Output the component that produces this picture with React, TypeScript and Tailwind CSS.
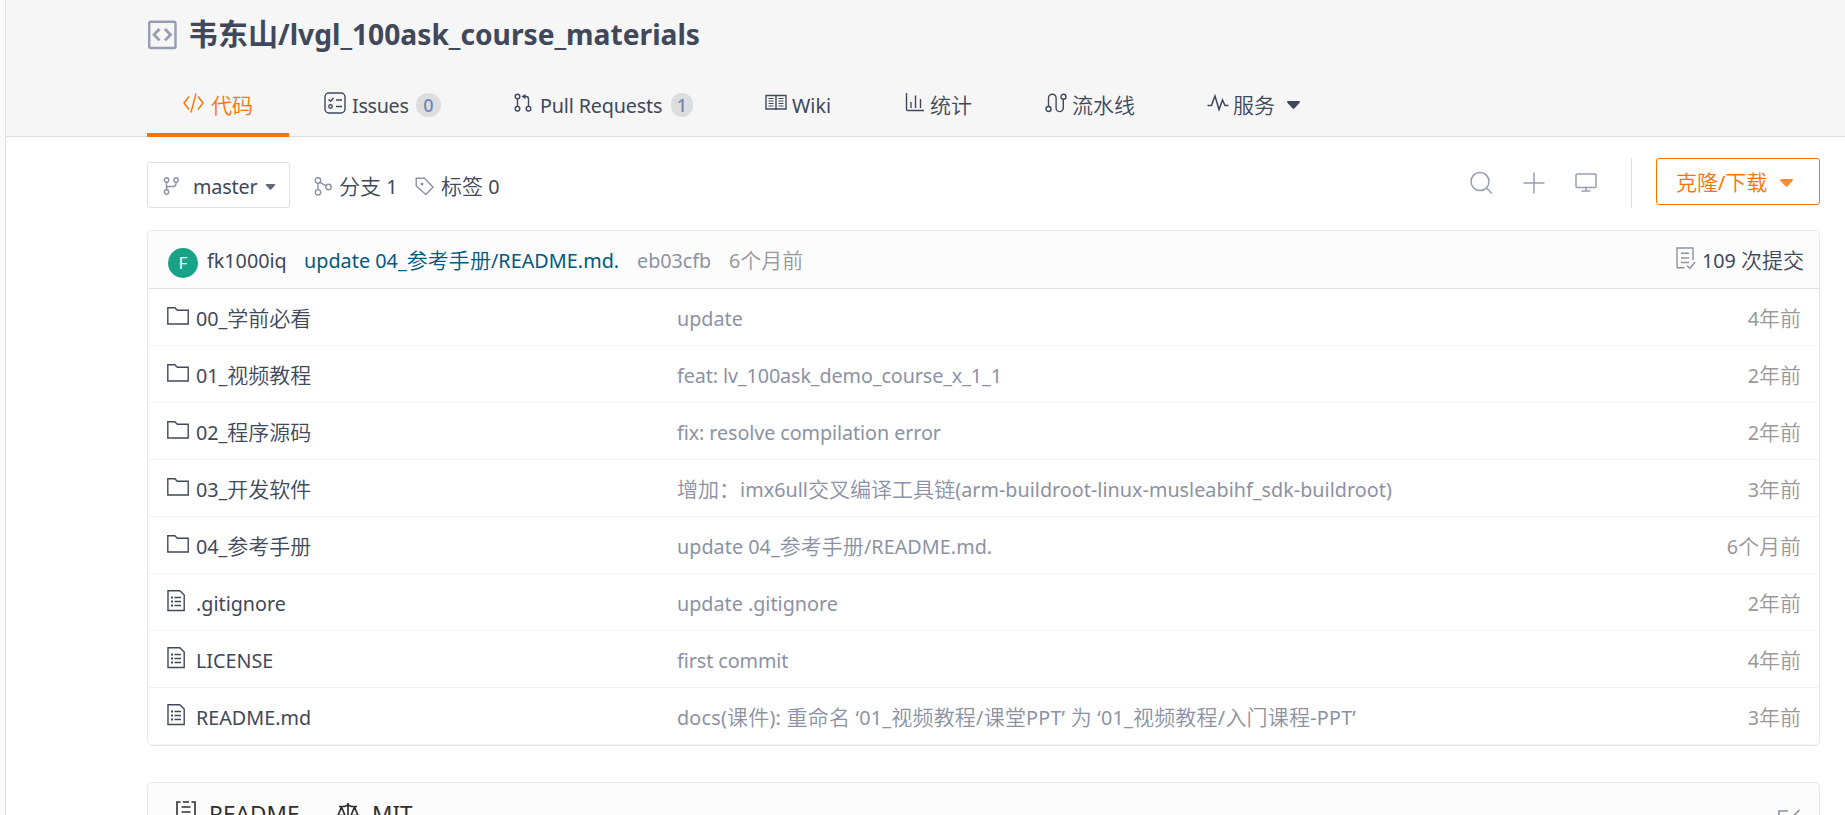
import type { ReactNode } from "react";
import clsx from "clsx";

// Latin runs are set a little smaller than the Chinese ones
function Text({ children, className }: { children: string; className?: string }) {
  const parts = children.split(/([\u3000-\u9fff\uff00-\uffef]+)/).filter(Boolean);
  return (
    <span className={clsx("whitespace-pre", className)}>
      {parts.map((part, i) =>
        /[\u3000-\u9fff\uff00-\uffef]/.test(part) ? (
          <span key={i} className="font-[350]">
            {part}
          </span>
        ) : (
          <span key={i} className="text-[0.94em] font-[380]">
            {part}
          </span>
        )
      )}
    </span>
  );
}

type IconProps = { className?: string; w: number; h: number; stroke?: number; children: ReactNode };

function Icon({ className, w, h, stroke = 1.4, children }: IconProps) {
  return (
    <svg
      width={w}
      height={h}
      viewBox={`0 0 ${w} ${h}`}
      fill="none"
      stroke="currentColor"
      strokeWidth={stroke}
      className={clsx("shrink-0", className)}
    >
      {children}
    </svg>
  );
}

function Caret({ className, w = 13, h = 8 }: { className?: string; w?: number; h?: number }) {
  return (
    <svg width={w} height={h} viewBox="0 0 13 8" fill="currentColor" className={clsx("shrink-0", className)}>
      <path d="M1.2 0h10.6c1 0 1.5 1 .8 1.7L7.4 7.4c-.5.5-1.3.5-1.8 0L.4 1.700C-.3 1 .2 0 1.2 0z" />
    </svg>
  );
}

const RepoIcon = () => (
  <Icon w={30} h={30} stroke={2.4} className="text-[#979eb0]">
    <rect x="2.2" y="1.7" width="26.300" height="26.300" rx="1.5" />
    <path d="M12.500 9 7 14.700l5.500 5.700M18 9l5.500 5.700L18 20.400" strokeWidth="2.800" />
  </Icon>
);

const CodeIcon = () => (
  <Icon w={21} h={20}>
    <path d="M6 3.5 1 10l5 6.500M15 3.500l5 6.500-5 6.500M13 .5 8 19.500" />
  </Icon>
);

const IssuesIcon = () => (
  <Icon w={22} h={22}>
    <rect x="1" y="1" width="20" height="20" rx="4" />
    <path d="m4.500 7.500 2 1.800L9.500 6M12 8h6M12 14.500h6" />
    <circle cx="6.500" cy="14.500" r="1.700" />
  </Icon>
);

const PullIcon = () => (
  <Icon w={18} h={20}>
    <circle cx="3.500" cy="3.500" r="2.300" />
    <circle cx="3.500" cy="15.700" r="2.300" />
    <circle cx="14.500" cy="15.700" r="2.300" />
    <path d="M3.500 6v7.500M14.500 13.500V6c0-1.500-.8-2.500-2.500-2.500H8.500" />
    <path d="M11.500 1v5L7.500 3.500z" fill="currentColor" stroke="none" />
  </Icon>
);

const WikiIcon = () => (
  <Icon w={22} h={17}>
    <path d="M1 1.500h20v13.500H1zM11 1.500v14.500" />
    <path d="M3.500 4.500h5M3.500 7h5M3.500 9.500h5M3.500 12h5M13.500 4.500h5M13.500 7h5M13.500 9.500h5M13.500 12h5" strokeWidth="1.100" />
  </Icon>
);

const ChartIcon = () => (
  <Icon w={20} h={19}>
    <path d="M1.500 0v16.500c0 .7.300 1 1 1H19M6 15V9M10.500 15V2.500M15.500 15V6" />
  </Icon>
);

const PipelineIcon = () => (
  <Icon w={22} h={20}>
    <circle cx="3.500" cy="16" r="2.500" />
    <circle cx="18.500" cy="3.700" r="2.500" />
    <path d="M3.500 13.500V5a3.800 3.800 0 0 1 7.600 0v10a3.600 3.600 0 0 0 7.200 0V6.300" />
  </Icon>
);

const PulseIcon = () => (
  <Icon w={22} h={18} stroke={1.5}>
    <path d="M.5 11.500h4L8 2l4 13.500L15.500 6l2.500 5.500h3.500" />
  </Icon>
);

const BranchIcon = () => (
  <Icon w={17} h={18} className="text-[#8c92a4]">
    <circle cx="3.500" cy="3" r="2.200" />
    <circle cx="3.500" cy="15" r="2.200" />
    <circle cx="13" cy="3" r="2.200" />
    <path d="M3.500 5.200v7.600M13 5.200v1.300c0 2-1 3-3 3H6c-1.500 0-2.500.8-2.500 2.300" />
  </Icon>
);

const ForkIcon = () => (
  <Icon w={19} h={19} className="text-[#8c92a4]">
    <circle cx="4" cy="3.500" r="2.700" />
    <circle cx="4" cy="15.300" r="2.700" />
    <circle cx="14.500" cy="10" r="2.700" />
    <path d="M4 6.200v6.400M6 5.300 12 8.800" />
  </Icon>
);

const TagIcon = () => (
  <Icon w={19} h={19} className="text-[#8c92a4]">
    <path d="M1.200 1.200h8.300l8.500 9-7.200 7.300-9.600-8.500z" />
    <circle cx="7" cy="7" r=".8" fill="currentColor" />
  </Icon>
);

const FolderIcon = () => (
  <Icon w={22} h={18}>
    <path d="M.8.8h7l2.500 2.500h10.900v13.700H.8z" />
  </Icon>
);

const FileIcon = () => (
  <Icon w={18} h={22}>
    <path d="M1 .8h11.800l4.400 4.200v15.500H1zM7.500 7.500h6.500M7.500 11.500h6.500M7.500 15.500h6.500" />
    <path d="M4 7.500h2M4 11.500h2M4 15.500h2" strokeWidth="2" />
  </Icon>
);

const CommitsIcon = () => (
  <Icon w={20} h={23} className="text-[#8c92a4]">
    <path d="M8.500 20.800H2.500c-1 0-1.500-.5-1.500-1.500V1h16v12M5 6.200h8M5 11h8M5 15.500h8M11 18.500l3 3 5-6.500" />
  </Icon>
);

const tabs = [
  { label: "代码", icon: <CodeIcon />, box: "w-[142px] pl-[36px]", gap: "w-[28px]", active: true },
  { label: "Issues", icon: <IssuesIcon />, box: "w-[188px] pl-[35px]", gap: "w-[28px]", count: "0", badge: "w-[25px]", text: "w-[64px] tracking-[-0.3px]" },
  { label: "Pull Requests", icon: <PullIcon />, box: "w-[252px] pl-[37px]", gap: "w-[26px]", count: "1", badge: "w-[22px]", text: "w-[131px] tracking-[-0.15px]" },
  { label: "Wiki", icon: <WikiIcon />, box: "w-[140px] pl-[36px]", gap: "w-[27px]" },
  { label: "统计", icon: <ChartIcon />, box: "w-[140px] pl-[36px]", gap: "w-[25px]" },
  { label: "流水线", icon: <PipelineIcon />, box: "w-[162px] pl-[36px]", gap: "w-[27px]" },
  { label: "服务", icon: <PulseIcon />, box: "w-[160px] pl-[36px]", gap: "w-[26px]", caret: true, text: "w-[54px]" },
];

const files = [
  { name: "00_学前必看", message: "update", date: "4年前", dir: true },
  { name: "01_视频教程", message: "feat: lv_100ask_demo_course_x_1_1", date: "2年前", dir: true, tracking: "tracking-[-0.1px]" },
  { name: "02_程序源码", message: "fix: resolve compilation error", date: "2年前", dir: true, tracking: "tracking-[-0.08px]" },
  {
    name: "03_开发软件",
    message: "增加：imx6ull交叉编译工具链(arm-buildroot-linux-musleabihf_sdk-buildroot)",
    date: "3年前",
    dir: true,
    tracking: "tracking-[0.03px]",
  },
  { name: "04_参考手册", message: "update 04_参考手册/README.md.", date: "6个月前", dir: true, tracking: "tracking-[0.05px]" },
  { name: ".gitignore", message: "update .gitignore", date: "2年前" },
  { name: "LICENSE", message: "first commit", date: "4年前", tracking: "tracking-[-0.08px]" },
  {
    name: "README.md",
    message: "docs(课件): 重命名 ‘01_视频教程/课堂PPT’ 为 ‘01_视频教程/入门课程-PPT’",
    date: "3年前",
    tracking: "tracking-[0.22px]",
  },
];

function Header() {
  return (
    <header className="h-[137px] border-b border-[#dcdcdc] bg-[#f6f6f6] pl-[141px]">
      <div className="flex h-[70px] items-center">
        <RepoIcon />
        <h1 className="mb-[2px] ml-[11px] whitespace-pre text-[30px] font-bold leading-[40px]">
          韦东山<span className="text-[28.200px]">/lvgl_100ask_course_materials</span>
        </h1>
      </div>
      <nav className="flex h-[67px]">
        {tabs.map((tab) => (
          <div
            key={tab.label}
            className={clsx(
              "flex items-center",
              tab.box,
              tab.active ? "border-b-4 border-[#fe7300] pt-[7px] text-[#fe7300]" : "pt-[3px]"
            )}
          >
            <span className={clsx("mb-[5px] shrink-0", tab.gap)}>{tab.icon}</span>
            <Text className={tab.text}>{tab.label}</Text>
            {tab.count && (
              <span
                className={clsx(
                  "flex h-[24px] items-center justify-center rounded-full bg-[#dcddde] text-[18px] font-medium text-[#7285b3]",
                  tab.badge
                )}
              >
                {tab.count}
              </span>
            )}
            {tab.caret && <Caret />}
          </div>
        ))}
      </nav>
    </header>
  );
}

function Toolbar() {
  return (
    <div className="flex h-[93px] items-start pt-[21px]">
      <div className="mt-[4px] flex h-[46px] w-[143px] items-center rounded-[3px] border border-[#dce3e8] pl-[15px] pt-[2px]">
        <span className="mb-px w-[30px]">
          <BranchIcon />
        </span>
        <Text className="w-[72px] tracking-[-0.15px]">master</Text>
        <Caret w={11} h={6} className="mt-px text-[#61687c]" />
      </div>
      <div className="mt-[12px] flex items-center pl-[24px]">
        <span className="mb-px w-[25px]">
          <ForkIcon />
        </span>
        <Text className="w-[76px]">分支 1</Text>
        <span className="mb-px w-[26px]">
          <TagIcon />
        </span>
        <Text>标签 0</Text>
      </div>
      <div className="ml-auto flex text-[#979eb0]">
        <Icon w={24} h={24} stroke={1.5} className="mr-[29px] mt-[13px]">
          <circle cx="10" cy="10.500" r="9" />
          <path d="m16.500 17 5.500 5.500" />
        </Icon>
        <Icon w={22} h={22} stroke={1.5} className="mr-[30px] mt-[14px]">
          <path d="M.5 11h21M11 .5v21" />
        </Icon>
        <Icon w={22} h={20} stroke={1.5} className="mr-[34px] mt-[15px]">
          <rect x="1" y="1" width="20" height="13.500" rx="1" />
          <path d="M11 14.500v3M6.500 18h9" />
        </Icon>
        <div className="mr-[24px] h-[50px] w-px bg-[#dcdfe2]" />
        <button className="flex h-[47px] w-[164px] items-center rounded-[3px] border border-[#fe7300] pl-[19px] pt-[2px] text-left text-[#fe7300]">
          <Text className="w-[104px]">克隆/下载</Text>
          <Caret className="text-[#fe8c32]" />
        </button>
      </div>
    </div>
  );
}

function FileTable() {
  return (
    <div className="overflow-hidden rounded-[5px] border border-[#e3e9ed]">
      <div className="flex h-[58px] items-center border-b border-[#dce3e8] bg-[#fcfcfc] pl-[20px] pr-[15px] pt-[2px]">
        <span className="mt-[5px] flex size-[30px] items-center justify-center rounded-full bg-[#17a388] text-[17px] text-white">
          F
        </span>
        <Text className="ml-[9px] w-[97px]">fk1000iq</Text>
        <Text className="w-[333px] tracking-[0.05px] text-[#005980]">update 04_参考手册/README.md.</Text>
        <Text className="w-[92px] text-[#8c92a4]">eb03cfb</Text>
        <Text className="text-[#999]">6个月前</Text>
        <span className="mb-[4px] ml-auto mr-[6px]">
          <CommitsIcon />
        </span>
        <Text>109 次提交</Text>
      </div>
      {files.map((file) => (
        <div key={file.name} className="flex h-[57px] items-center border-b border-[#f0f3f6] pl-[19px] pr-[18px] pt-[2px]">
          <span className="mb-[4px] w-[29px]">{file.dir ? <FolderIcon /> : <FileIcon />}</span>
          <Text className="w-[481px]">{file.name}</Text>
          <Text className={clsx("text-[#8c92a4]", file.tracking)}>{file.message}</Text>
          <Text className="ml-auto text-[#999]">{file.date}</Text>
        </div>
      ))}
    </div>
  );
}

function ReadmeBar() {
  return (
    <div className="mt-[36px] flex h-[60px] items-start rounded-t-[5px] border border-[#e3e9ed] bg-[#fcfcfc] pl-[28px] pt-[14px] text-[24px] text-[#303030]">
      <Icon w={20} h={22} stroke={1.6} className="mr-[13px] mt-[4px]">
        <path d="M4.500 1H1v20h18V1h-3.500M7 1h6M5.500 6h9M5.500 11h9M5.500 16h9" />
      </Icon>
      <Text className="w-[128px]">README</Text>
      <Icon w={22} h={21} stroke={1.7} className="mr-[13px] mt-[6px]">
        <path d="M11 0v18M6 19h10M2 3.500h5.500L11 2l3.500 1.500H20M4.500 4 1 12.500h7L4.500 4M17.500 4 14 12.500h7L17.500 4" />
      </Icon>
      <Text>MIT</Text>
      <Icon w={24} h={22} stroke={1.7} className="ml-auto mr-[18px] mt-[12px] text-[#8c92a4]">
        <path d="M11 2H2v18h18v-9M22.500 1 9 14" />
      </Icon>
    </div>
  );
}

export default function App() {
  return (
    <div className="flex h-[815px] overflow-hidden bg-[#fafafa] pl-[5px] font-['Noto_Sans','Noto_Sans_CJK_SC',sans-serif] text-[21px] leading-[32px] text-[#40485b]">
      <div className="flex-1 border-l border-[#e0e0e0] bg-white">
        <Header />
        <main className="pl-[141px] pr-[25px]">
          <Toolbar />
          <FileTable />
          <ReadmeBar />
        </main>
      </div>
    </div>
  );
}
